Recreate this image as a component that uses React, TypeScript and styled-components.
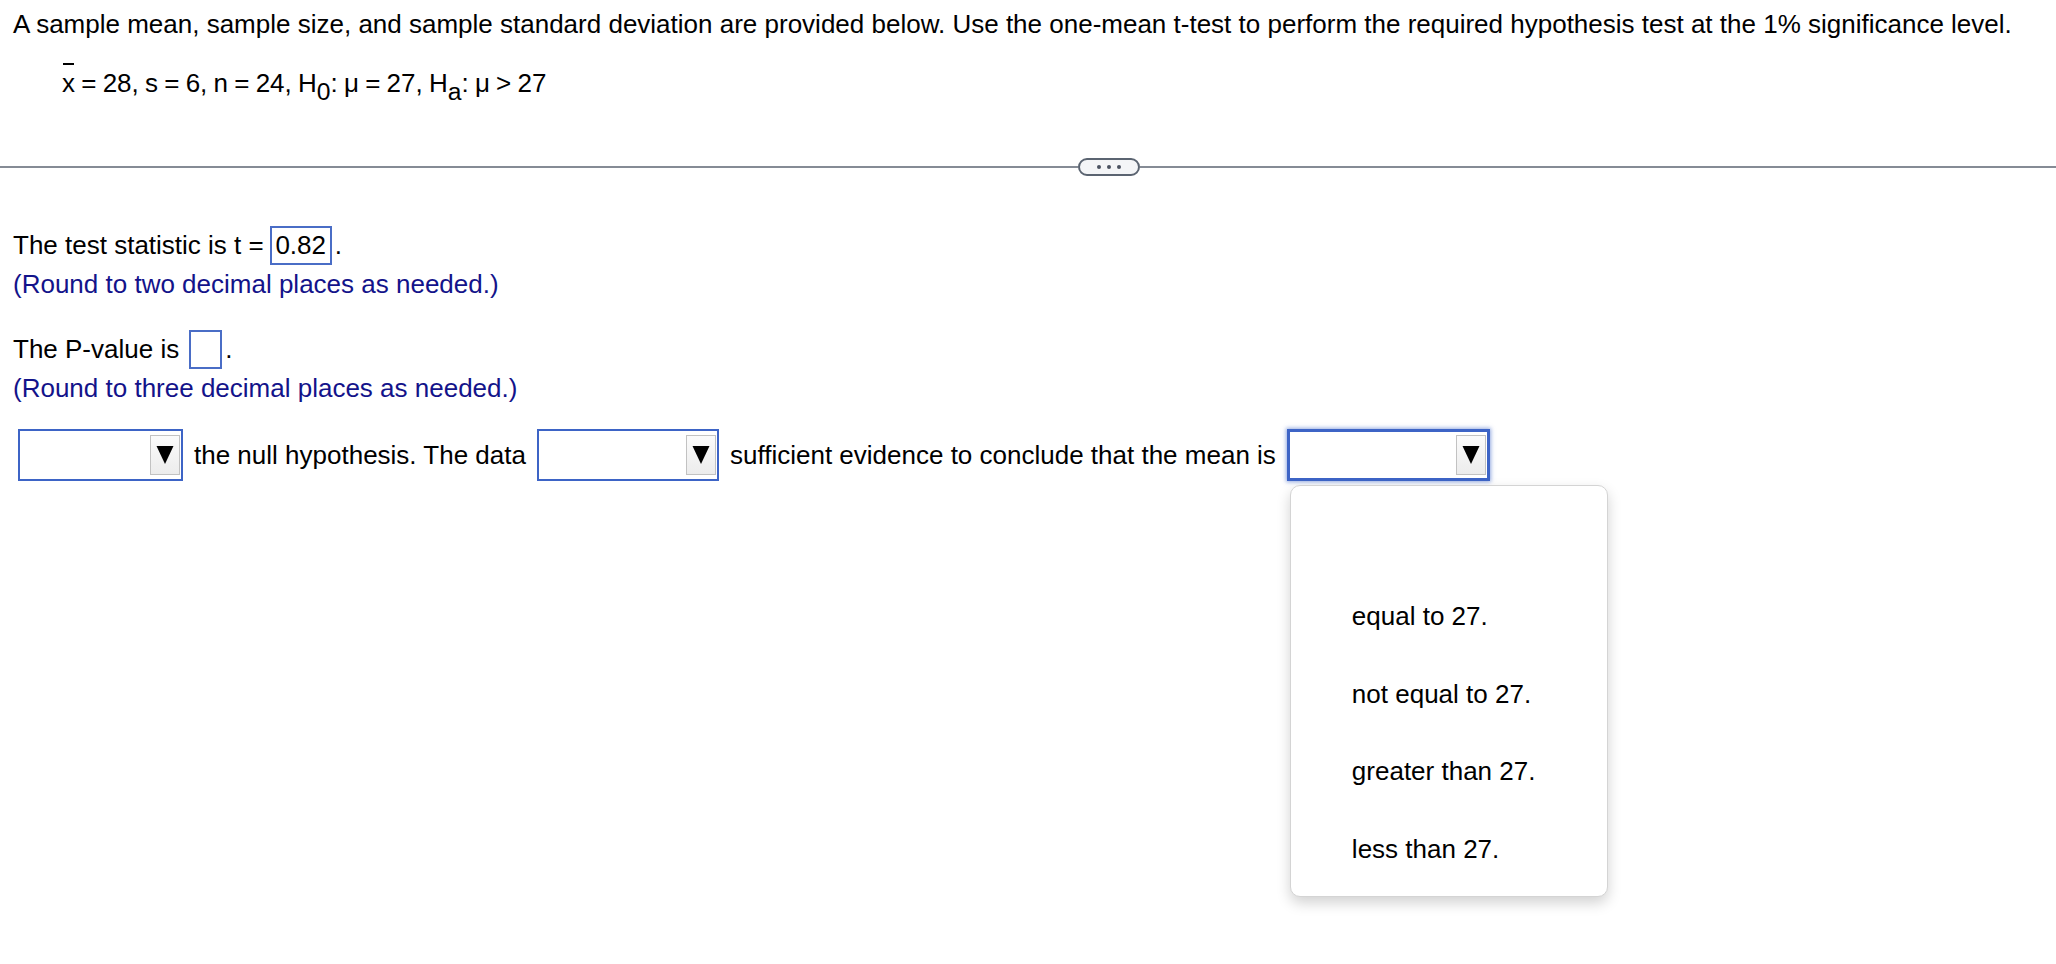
import React from 'react';
import styled, { createGlobalStyle } from 'styled-components';

const GlobalStyle = createGlobalStyle`
  html, body {
    margin: 0;
    padding: 0;
    background: #ffffff;
  }
  body {
    font-family: "Liberation Sans", Arial, Helvetica, sans-serif;
    font-size: 26px;
    color: #000000;
  }
`;

const Page = styled.div`
  width: 2056px;
  min-height: 964px;
  overflow: hidden;
`;

const Header = styled.div`
  padding: 9px 13px 0;
`;

const Prompt = styled.div`
  line-height: 30px;
  white-space: nowrap;
`;

const Formula = styled.div`
  margin-top: 29px;
  padding-left: 49px;
  line-height: 30px;
  white-space: nowrap;
  word-spacing: -1px;
`;

const Bar = styled.span`
  position: relative;
  &::before {
    content: '';
    position: absolute;
    left: 1px;
    top: -5px;
    width: 11px;
    height: 2px;
    background: #000;
  }
`;

const Sub = styled.sub`
  font-size: 0.95em;
  vertical-align: -0.32em;
  line-height: 0;
`;

const Divider = styled.div`
  margin-top: 60px;
  height: 18px;
  display: flex;
  align-items: center;
`;

const Rule = styled.div<{ $width?: number }>`
  height: 2px;
  background: #858b95;
  flex: ${({ $width }) => ($width ? `0 0 ${$width}px` : '1 1 auto')};
`;

const Pill = styled.div`
  flex: 0 0 auto;
  width: 58px;
  height: 14px;
  border: 2px solid #5b6471;
  border-radius: 9px;
  background: #f4f5f7;
  display: flex;
  align-items: center;
  justify-content: center;
  gap: 6px;
`;

const Dot = styled.span`
  width: 4px;
  height: 4px;
  border-radius: 50%;
  background: #4b5260;
`;

const Content = styled.div`
  padding: 0 13px;
`;

const Line = styled.div<{ $top: number }>`
  margin-top: ${({ $top }) => $top}px;
  height: 40px;
  display: flex;
  align-items: center;
  white-space: nowrap;
`;

const Hint = styled.div<{ $top: number }>`
  margin-top: ${({ $top }) => $top}px;
  line-height: 30px;
  color: #13138a;
  white-space: nowrap;
`;

const AnswerBox = styled.span<{ $width: number; $gap: number }>`
  display: inline-flex;
  align-items: center;
  justify-content: center;
  box-sizing: border-box;
  width: ${({ $width }) => $width}px;
  height: 39px;
  border: 2px solid #4a6dc6;
  margin-left: ${({ $gap }) => $gap}px;
  margin-right: 3px;
`;

const Row = styled.div`
  margin-top: 26px;
  height: 52px;
  padding-left: 5px;
  display: flex;
  align-items: center;
  gap: 11px;
  white-space: nowrap;
`;

const SelectWrap = styled.div`
  position: relative;
`;

const Select = styled.div<{ $width: number; $focused?: boolean }>`
  box-sizing: border-box;
  width: ${({ $width }) => $width}px;
  height: 52px;
  border: ${({ $focused }) => ($focused ? '3px' : '2px')} solid #3d64c6;
  box-shadow: ${({ $focused }) => ($focused ? '0 0 4px 1px rgba(61, 100, 198, 0.55)' : 'none')};
  background: #fff;
  display: flex;
  align-items: center;
  justify-content: flex-end;
  padding-right: 1px;
`;

const ArrowButton = styled.div`
  box-sizing: border-box;
  width: 30px;
  height: 40px;
  border: 1px solid #c2c2c2;
  background: linear-gradient(180deg, #fbfbfb 0%, #ececec 100%);
  display: flex;
  align-items: center;
  justify-content: center;
`;

const Menu = styled.div`
  position: absolute;
  top: 56px;
  left: 3px;
  box-sizing: border-box;
  width: 318px;
  height: 412px;
  background: #fff;
  border: 1px solid #d4d4d4;
  border-radius: 10px;
  box-shadow: 0 6px 14px rgba(0, 0, 0, 0.18);
  padding: 92px 0 0 61px;
  display: flex;
  flex-direction: column;
`;

const Option = styled.div`
  height: 77.5px;
  display: flex;
  align-items: center;
`;

const Arrow = () => (
  <svg width="18" height="20" viewBox="0 0 18 20">
    <polygon points="0.5,1 17.5,1 9,19" fill="#000" />
  </svg>
);

const Dropdown: React.FC<{ width: number; focused?: boolean; children?: React.ReactNode }> = ({
  width,
  focused,
  children,
}) => (
  <SelectWrap>
    <Select $width={width} $focused={focused}>
      <ArrowButton>
        <Arrow />
      </ArrowButton>
    </Select>
    {children}
  </SelectWrap>
);

const options = ['equal to 27.', 'not equal to 27.', 'greater than 27.', 'less than 27.'];

export default function App() {
  return (
    <Page>
      <GlobalStyle />
      <Header>
        <Prompt>
          A sample mean, sample size, and sample standard deviation are provided below. Use the
          one-mean t-test to perform the required hypothesis test at the 1% significance level.
        </Prompt>
        <Formula>
          <Bar>x</Bar> = 28, s = 6, n = 24, H<Sub>0</Sub>: μ = 27, H<Sub>a</Sub>: μ &gt; 27
        </Formula>
      </Header>

      <Divider>
        <Rule $width={1078} />
        <Pill>
          <Dot />
          <Dot />
          <Dot />
        </Pill>
        <Rule />
      </Divider>

      <Content>
        <Line $top={49}>
          The test statistic is t =<AnswerBox $width={62} $gap={6}>0.82</AnswerBox>.
        </Line>
        <Hint $top={4}>(Round to two decimal places as needed.)</Hint>
        <Line $top={30}>
          The P-value is<AnswerBox $width={33} $gap={10} />.
        </Line>
        <Hint $top={4}>(Round to three decimal places as needed.)</Hint>
        <Row>
          <Dropdown width={165} />
          <span>the null hypothesis. The data</span>
          <Dropdown width={182} />
          <span>sufficient evidence to conclude that the mean is</span>
          <Dropdown width={203} focused>
            <Menu>
              {options.map((o) => (
                <Option key={o}>{o}</Option>
              ))}
            </Menu>
          </Dropdown>
        </Row>
      </Content>
    </Page>
  );
}
